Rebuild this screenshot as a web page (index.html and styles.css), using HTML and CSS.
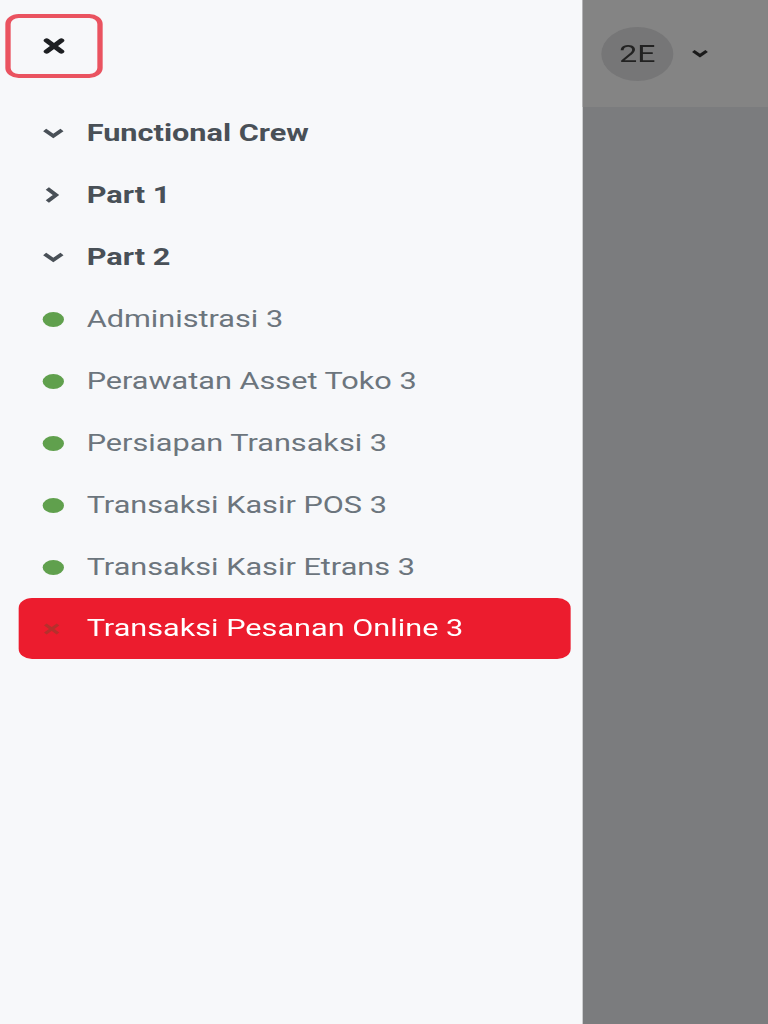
FILE: index.html
```html
<!DOCTYPE html>
<html lang="id">

<head>
    <meta charset="UTF-8">
    <meta name="viewport" content="width=device-width, initial-scale=1.0">
    <title>Menu</title>
    <link rel="stylesheet" href="styles.css">
</head>

<body>
    <div class="layar">
        <aside class="sidebar">
            <div class="tutup">
                <svg width="17" height="16" viewBox="0 0 17 16">
                    <path d="M3 2.5 L14 13.5 M14 2.5 L3 13.5" stroke="#1d1f22" stroke-width="4.4" stroke-linecap="round" />
                </svg>
            </div>
            <ul class="menu">
                <li class="judul">
                    <span class="ikon"><svg width="16" height="11" viewBox="0 0 16 11"><path d="M1.5 2 L8 8 L14.5 2" fill="none" stroke="#495057" stroke-width="3.4" /></svg></span>
                    Functional Crew
                </li>
                <li class="judul">
                    <span class="ikon"><svg width="16" height="16" viewBox="0 0 16 16"><path d="M3.5 1.5 L10 8 L3.5 14.5" fill="none" stroke="#495057" stroke-width="3.4" /></svg></span>
                    Part 1
                </li>
                <li class="judul">
                    <span class="ikon"><svg width="16" height="11" viewBox="0 0 16 11"><path d="M1.5 2 L8 8 L14.5 2" fill="none" stroke="#495057" stroke-width="3.4" /></svg></span>
                    Part 2
                </li>
                <li><span class="ikon"><i class="titik"></i></span>Administrasi 3</li>
                <li><span class="ikon"><i class="titik"></i></span>Perawatan Asset Toko 3</li>
                <li><span class="ikon"><i class="titik"></i></span>Persiapan Transaksi 3</li>
                <li><span class="ikon"><i class="titik"></i></span>Transaksi Kasir POS 3</li>
                <li><span class="ikon"><i class="titik"></i></span>Transaksi Kasir Etrans 3</li>
                <li class="aktif">
                    <span class="ikon"><svg width="14" height="12" viewBox="0 0 14 12"><path d="M2 1.5 L11.5 10.5 M11.5 1.5 L2 10.5" stroke="#b5302c" stroke-width="2.8" /></svg></span>
                    Transaksi Pesanan Online 3
                </li>
            </ul>
        </aside>
        <div class="latar">
            <div class="topo">
                <div class="avatar">2E</div>
                <svg width="14" height="9" viewBox="0 0 14 9"><path d="M2 2 L7 6.5 L12 2" fill="none" stroke="#1a1a1a" stroke-width="2.8" /></svg>
            </div>
        </div>
    </div>
</body>

</html>
```

FILE: styles.css
```css
* {
    margin: 0;
    padding: 0;
    box-sizing: border-box;
}

body {
    width: 768px;
    height: 1024px;
    overflow: hidden;
    font-family: Roboto, "Liberation Sans", sans-serif;
    background: #7b7c7e;
}

/* a tela original era 9:16, esticada na horizontal */
.layar {
    display: flex;
    width: 576px;
    height: 1024px;
    transform: scaleX(1.3333);
    transform-origin: 0 0;
}

.sidebar {
    width: 437px;
    flex-shrink: 0;
    background-color: #f7f8fa;
    padding-top: 14px;
}

.tutup {
    display: flex;
    width: 73px;
    height: 64px;
    margin-left: 4px;
    justify-content: center;
    align-items: center;
    border: 4px solid #ea5360;
    border-radius: 10px;
}

.menu {
    list-style-type: none;
    margin: 24px 9px 0 14px;
}

.menu li {
    display: flex;
    align-items: center;
    height: 62px;
    padding-left: 18px;
    font-size: 23px;
    color: #6c757d;
}

.menu li.judul {
    font-weight: bold;
    color: #495057;
}

.ikon {
    display: flex;
    align-items: center;
    width: 33px;
}

.titik {
    display: block;
    width: 16px;
    height: 15px;
    border-radius: 50%;
    background-color: #60a04d;
}

.menu li.aktif {
    background-color: #ec1c2e;
    color: white;
    border-radius: 10px;
    height: 61px;
}

.latar {
    flex: 1;
}

.topo {
    display: flex;
    align-items: center;
    height: 107px;
    padding-left: 14px;
    gap: 13px;
    background-color: #848484;
}

.avatar {
    display: flex;
    width: 54px;
    height: 54px;
    justify-content: center;
    align-items: center;
    border-radius: 50%;
    background-color: #767677;
    font-size: 24px;
    color: #222;
}
```
